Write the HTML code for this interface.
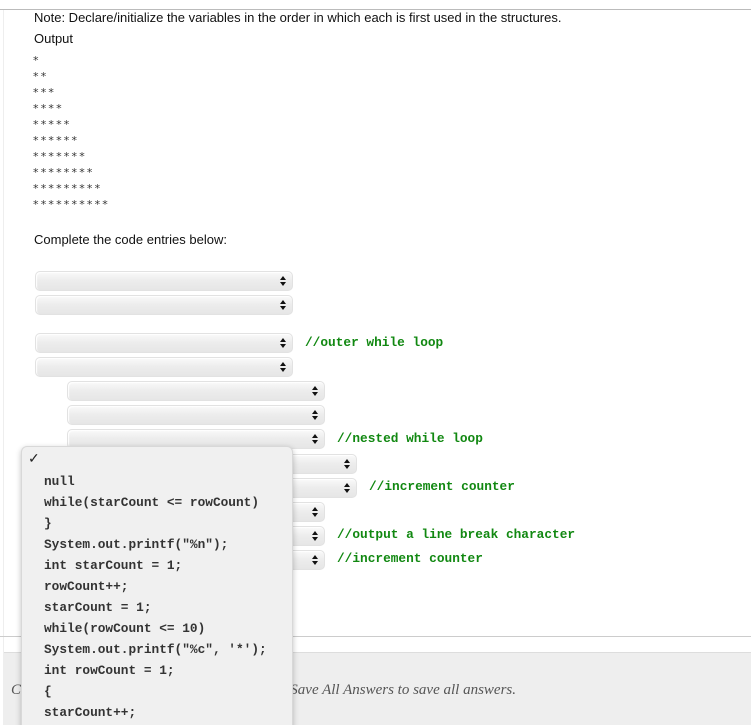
<!DOCTYPE html>
<html style="overflow:hidden;height:725px"><head><meta charset="utf-8"><style>
body{margin:0;width:751px;height:725px;background:#fff;position:relative;overflow:hidden;font-family:"Liberation Sans",sans-serif;}
.a{position:absolute;}
.top{left:0;top:9px;width:751px;height:1px;background:#bbb;}
.lb{left:3px;top:10px;width:1px;height:715px;background:#eee;}
.t{font-size:13px;color:#111;left:34px;}
.st{left:33px;font-size:11px;line-height:12px;color:#333;letter-spacing:2.2px;font-family:"DejaVu Sans",sans-serif;}
.sel{position:absolute;height:18px;border:1px solid #e2e2e2;border-radius:5px;background:linear-gradient(#fafafa,#ececec 50%,#e6e6e6);box-shadow:inset 1px 1px 1px #fff;}
.sel:after{content:"";position:absolute;right:6px;top:4px;width:0;height:0;border-left:3px solid transparent;border-right:3px solid transparent;border-bottom:4px solid #111;}
.sel:before{content:"";position:absolute;right:6px;top:10px;width:0;height:0;border-left:3px solid transparent;border-right:3px solid transparent;border-top:4px solid #111;}
.c{position:absolute;font-family:"Liberation Mono",monospace;font-weight:bold;font-size:12.8px;color:#118811;}
.pop{left:21px;top:446px;width:270px;height:290px;background:#f0f0f0;border:1px solid #d8d8d8;border-radius:6px;box-shadow:0 2px 6px rgba(0,0,0,.25);}
.it{position:absolute;left:22px;font-family:"Liberation Mono",monospace;font-weight:bold;font-size:12.8px;color:#333;}
.foot{left:4px;top:652px;width:747px;height:73px;background:#eeeeee;border-top:1px solid #ddd;}
.hr{left:0;top:636px;width:751px;height:1px;background:#ccc;}
</style></head><body>
<div class="a top"></div><div class="a lb"></div>
<div class="a t" style="top:10px">Note: Declare/initialize the variables in the order in which each is first used in the structures.</div>
<div class="a t" style="top:31px">Output</div>
<div class="a st" style="top:55px">*</div>
<div class="a st" style="top:71px">**</div>
<div class="a st" style="top:87px">***</div>
<div class="a st" style="top:103px">****</div>
<div class="a st" style="top:119px">*****</div>
<div class="a st" style="top:135px">******</div>
<div class="a st" style="top:151px">*******</div>
<div class="a st" style="top:167px">********</div>
<div class="a st" style="top:183px">*********</div>
<div class="a st" style="top:199px">**********</div>
<div class="a t" style="top:232px">Complete the code entries below:</div>

<div class="sel" style="left:35px;top:271px;width:256px"></div>
<div class="sel" style="left:35px;top:295px;width:256px"></div>
<div class="sel" style="left:35px;top:333px;width:256px"></div><div class="c" style="left:305px;top:335px">//outer while loop</div>
<div class="sel" style="left:35px;top:357px;width:256px"></div>
<div class="sel" style="left:67px;top:381px;width:256px"></div>
<div class="sel" style="left:67px;top:405px;width:256px"></div>
<div class="sel" style="left:67px;top:429px;width:256px"></div><div class="c" style="left:337px;top:431px">//nested while loop</div>
<div class="sel" style="left:99px;top:454px;width:256px"></div>
<div class="sel" style="left:99px;top:478px;width:256px"></div><div class="c" style="left:369px;top:479px">//increment counter</div>
<div class="sel" style="left:67px;top:502px;width:256px"></div>
<div class="sel" style="left:67px;top:526px;width:256px"></div><div class="c" style="left:337px;top:527px">//output a line break character</div>
<div class="sel" style="left:67px;top:550px;width:256px"></div><div class="c" style="left:337px;top:551px">//increment counter</div>
<div class="sel" style="left:35px;top:574px;width:256px"></div>

<div class="a hr"></div>
<div class="a foot"><div style="position:absolute;left:7px;top:29px;font-family:'Liberation Serif',serif;font-style:italic;font-size:15px;color:#555">C</div><div style="position:absolute;right:235px;top:29px;white-space:nowrap;font-family:'Liberation Serif',serif;font-style:italic;font-size:15px;color:#555">and Submit. Click Save All Answers to save all answers.</div></div>

<div class="a pop">
<div style="position:absolute;left:6px;top:3px;font-size:14px;color:#222">✓</div>
<div class="it" style="top:27px">null</div>
<div class="it" style="top:48px">while(starCount &lt;= rowCount)</div>
<div class="it" style="top:69px">}</div>
<div class="it" style="top:90px">System.out.printf("%n");</div>
<div class="it" style="top:111px">int starCount = 1;</div>
<div class="it" style="top:132px">rowCount++;</div>
<div class="it" style="top:153px">starCount = 1;</div>
<div class="it" style="top:174px">while(rowCount &lt;= 10)</div>
<div class="it" style="top:195px">System.out.printf("%c", '*');</div>
<div class="it" style="top:216px">int rowCount = 1;</div>
<div class="it" style="top:237px">{</div>
<div class="it" style="top:258px">starCount++;</div>
</div>
</body></html>
